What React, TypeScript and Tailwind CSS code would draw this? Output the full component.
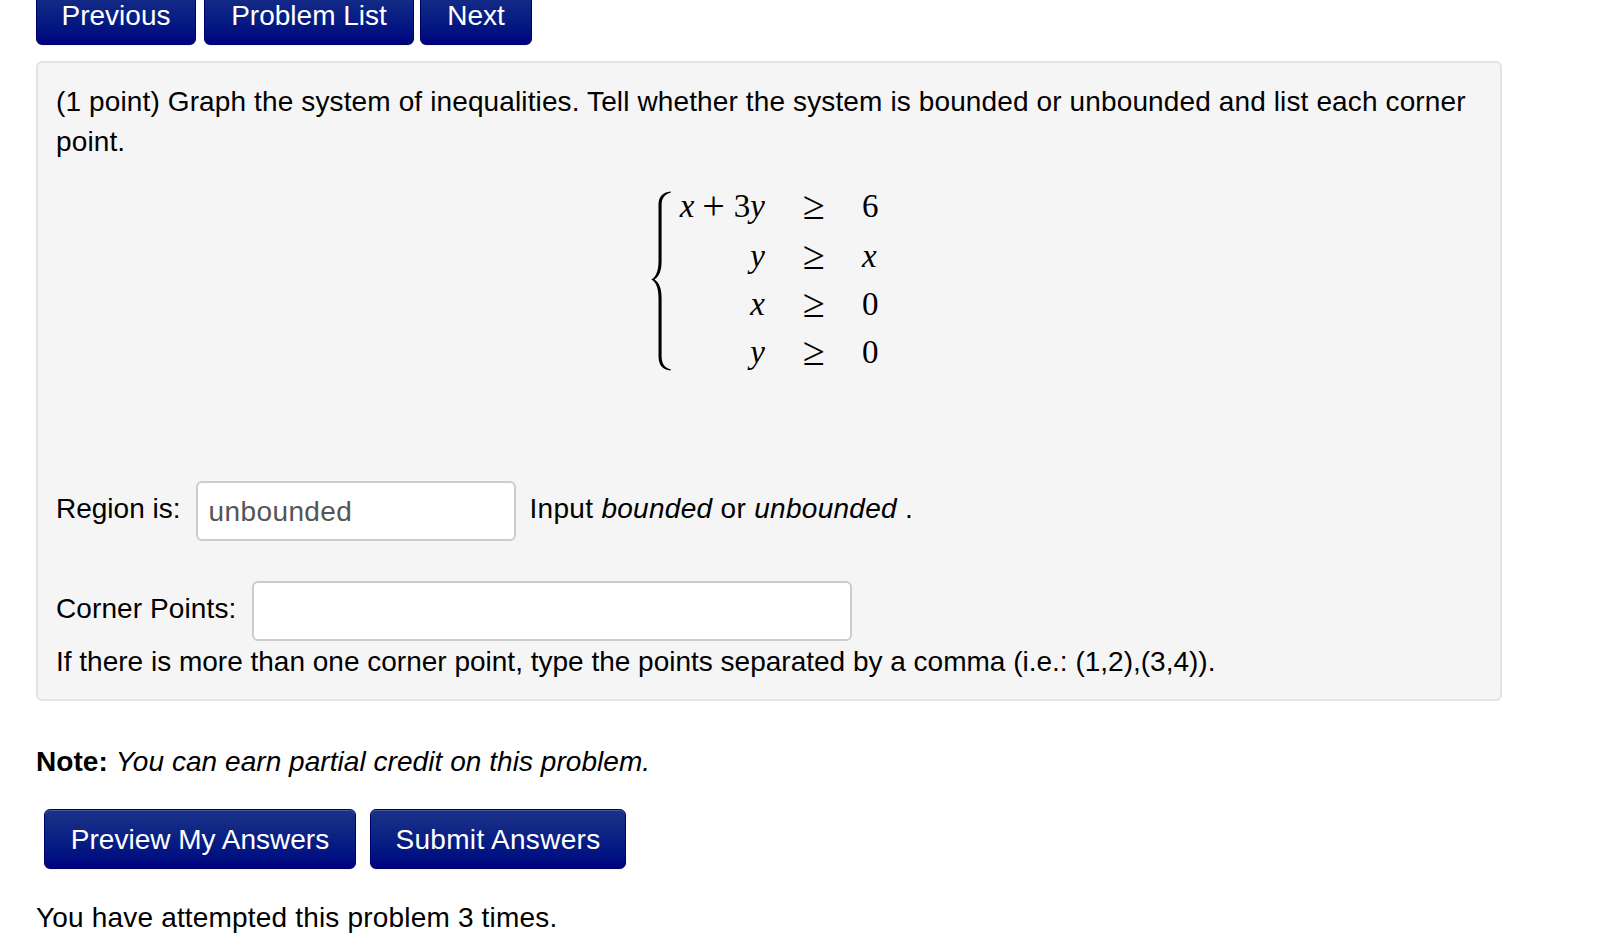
const navBtn =
  "flex h-[60px] items-center justify-center rounded-[6px] border border-[#00006b] bg-gradient-to-b from-[#1c3288] to-[#00007f] pt-[2px] text-[28px] text-white shadow-[inset_0_1px_0_rgba(255,255,255,0.2),0_1px_2px_rgba(0,0,0,0.05)]";

const rows = [
  {
    lhs: (
      <>
        <i>x</i>
        <span className="mr-[9px] ml-[8px] align-[-2px] text-[40px] leading-none">+</span>3<i>y</i>
      </>
    ),
    rhs: "6",
    rhsItalic: false,
    h: "h-[53px] pb-[2px]",
  },
  { lhs: <i>y</i>, rhs: "x", rhsItalic: true, h: "h-[47px] pb-[2px]" },
  { lhs: <i>x</i>, rhs: "0", rhsItalic: false, h: "h-[48px]" },
  { lhs: <i>y</i>, rhs: "0", rhsItalic: false, h: "h-[48px]" },
];

function MathSystem() {
  return (
    <div className="mx-auto mt-[18px] flex h-[301px] w-[236px] items-start">
      <svg width="20" height="180" viewBox="0 0 20 180" className="mt-[11px] shrink-0" fill="#000">
        {/* brace drawn filled so the stem stays heavier than the tips */}
        <path d="M19.7 0.5C11.5 1 7.5 6 7.5 14V70C7.5 80 5 86 0.3 88.5C5 91 7.5 97 7.5 107V165C7.5 174 11.5 179 19.7 179.5V178.3C14 177 10.6 173 10.6 165V107C10.6 97 8 91.5 3.5 88.5C8 85.5 10.6 80 10.6 70V14C10.6 7 14 3 19.7 1.7Z" />
      </svg>
      <div className="font-['Liberation_Serif',serif] text-[33px] leading-[40px] text-black">
        {rows.map((r, i) => (
          <div key={i} className={`flex items-center ${r.h}`}>
            <div className="w-[94px] whitespace-nowrap text-right">{r.lhs}</div>
            <div className="ml-[20px] w-[58px] text-center text-[40px]">≥</div>
            <div className={`ml-[19px] ${r.rhsItalic ? "italic" : ""}`}>{r.rhs}</div>
          </div>
        ))}
      </div>
    </div>
  );
}

export default function App() {
  return (
    <div className="-mt-[15px] h-[948px] overflow-hidden bg-white pl-[36px] font-['Liberation_Sans',Arial,sans-serif] text-[28px] leading-[40px] text-black">
      <div className="flex">
        <button className={`${navBtn} w-[160px]`}>Previous</button>
        <button className={`${navBtn} ml-[8px] w-[210px]`}>Problem List</button>
        <button className={`${navBtn} ml-[6px] w-[112px]`}>Next</button>
      </div>

      <div className="mt-[16px] w-[1466px] rounded-[6px] border-2 border-[#e3e3e3] bg-[#f5f5f5] px-[18px] pt-[19px] pb-[17px]">
        <p className="tracking-[0.125px]">
          (1 point) Graph the system of inequalities. Tell whether the system is bounded or unbounded and list each corner point.
        </p>
        <MathSystem />
        <div className="flex items-start">
          <span className="pt-[8px]">Region is:</span>
          <input
            readOnly
            value="unbounded"
            className="ml-[15px] h-[60px] w-[320px] rounded-[6px] border-2 border-[#cccccc] bg-white px-[11px] pt-[2px] text-[28px] tracking-[0.4px] text-[#555555] outline-none"
          />
          <span className="ml-[14px] pt-[8px] tracking-[0.3px]">
            Input <i>bounded</i> or <i>unbounded</i> .
          </span>
        </div>
        <div className="mt-[40px] flex items-start">
          <span className="pt-[8px] tracking-[0.1px]">Corner Points:</span>
          <input
            readOnly
            className="ml-[16px] h-[60px] w-[600px] rounded-[6px] border-2 border-[#cccccc] bg-white px-[11px] text-[28px] outline-none"
          />
        </div>
        <p className="mt-[1px]">If there is more than one corner point, type the points separated by a comma (i.e.: (1,2),(3,4)).</p>
      </div>

      <p className="mt-[41px] tracking-[0.05px]">
        <b>Note:</b> <i>You can earn partial credit on this problem.</i>
      </p>

      <div className="mt-[27px] ml-[8px] flex">
        <button className={`${navBtn} w-[312px]`}>Preview My Answers</button>
        <button className={`${navBtn} ml-[14px] w-[256px] tracking-[0.3px]`}>Submit Answers</button>
      </div>

      <p className="mt-[29px] tracking-[0.18px]">You have attempted this problem 3 times.</p>
    </div>
  );
}
